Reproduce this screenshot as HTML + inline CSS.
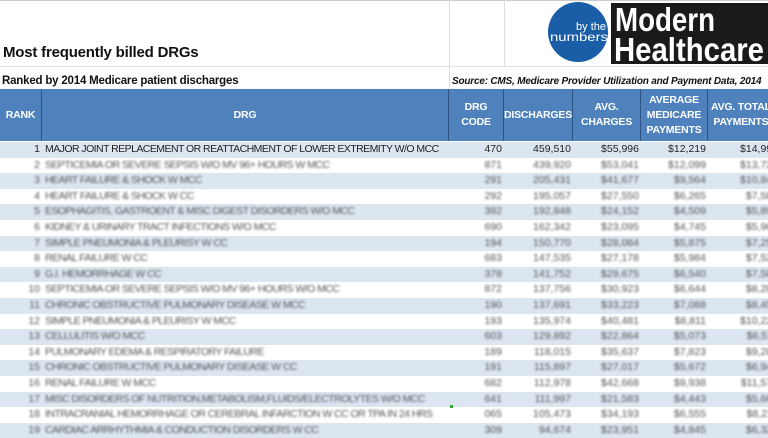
<!DOCTYPE html>
<html><head><meta charset="utf-8"><style>
*{margin:0;padding:0;box-sizing:border-box}
body{width:768px;height:436px;overflow:hidden;background:#fff;font-family:"Liberation Sans",Arial,sans-serif;position:relative}
.a{position:absolute;white-space:nowrap}
.hd{position:absolute;top:89px;height:52px;background:#4f81bd;color:#fff;font-weight:bold;font-size:10.5px;display:flex;align-items:center;justify-content:center;text-align:center;line-height:15px;border-right:1px solid #2f5486;letter-spacing:-0.2px}
.row{position:absolute;left:0;width:768px;height:15.6px;font-size:10.5px;color:#222;line-height:15.6px}
.row.b{background:#dce6f1}
.row span{position:absolute;top:0}
.bl span{filter:blur(1.1px);color:#555}
.r{left:0;width:40px;text-align:right}
.d{left:45px;letter-spacing:-0.55px}
.c1{left:449px;width:53px;text-align:right}
.c2{left:504px;width:67px;text-align:right}
.c3{left:573px;width:66px;text-align:right}
.c4{left:641px;width:65px;text-align:right}
.c5{left:708px;width:70px;text-align:right}
</style></head><body>
<div class="a" style="left:0;top:0;width:768px;height:1px;background:#ccc"></div>
<div class="a" style="left:449px;top:0;width:1px;height:89px;background:#ddd"></div>
<div class="a" style="left:504px;top:0;width:1px;height:66px;background:#ddd"></div>
<div class="a" style="left:0;top:66px;width:768px;height:1px;background:#e2e2e2"></div>
<div class="a" style="left:3px;top:44px;font-size:15px;font-weight:bold;color:#111;letter-spacing:-0.2px">Most frequently billed DRGs</div>
<div class="a" style="left:2px;top:75px;font-size:11.5px;font-weight:bold;color:#111;letter-spacing:-0.2px">Ranked by 2014 Medicare patient discharges</div>
<div class="a" style="left:452px;top:76px;font-size:10px;font-weight:bold;font-style:italic;color:#111;letter-spacing:-0.2px">Source: CMS, Medicare Provider Utilization and Payment Data, 2014</div>
<svg class="a" style="left:540px;top:0" width="228" height="66">
<circle cx="38" cy="32" r="30" fill="#1a5ea8"/>
<text x="66" y="30" fill="#fff" font-family="Liberation Sans Narrow,Liberation Sans,sans-serif" font-size="11" text-anchor="end">by the</text>
<text x="68" y="41" fill="#fff" font-family="Liberation Sans Narrow,Liberation Sans,sans-serif" font-size="12" text-anchor="end" textLength="58" lengthAdjust="spacingAndGlyphs">numbers</text>
<rect x="71" y="3" width="157" height="61" fill="#1a1a1a"/>
<text x="75" y="31" fill="#fff" font-family="Liberation Sans Narrow,Liberation Sans,sans-serif" font-weight="bold" font-size="33" textLength="100" lengthAdjust="spacingAndGlyphs">Modern</text>
<text x="74" y="61" fill="#fff" font-family="Liberation Sans Narrow,Liberation Sans,sans-serif" font-weight="bold" font-size="33" textLength="150" lengthAdjust="spacingAndGlyphs">Healthcare</text>
</svg>
<div class="hd" style="left:0;width:42px">RANK</div>
<div class="hd" style="left:42px;width:407px">DRG</div>
<div class="hd" style="left:449px;width:55px">DRG<br>CODE</div>
<div class="hd" style="left:504px;width:69px">DISCHARGES</div>
<div class="hd" style="left:573px;width:68px">AVG.<br>CHARGES</div>
<div class="hd" style="left:641px;width:67px">AVERAGE<br>MEDICARE<br>PAYMENTS</div>
<div class="hd" style="left:708px;width:70px;justify-content:flex-start;padding-left:3px">AVG. TOTAL<br>PAYMENTS</div>

<div class="row b" style="top:142px"><span class="r">1</span><span class="d">MAJOR JOINT REPLACEMENT OR REATTACHMENT OF LOWER EXTREMITY W/O MCC</span><span class="c1">470</span><span class="c2">459,510</span><span class="c3">$55,996</span><span class="c4">$12,219</span><span class="c5">$14,999</span></div>
<div class="row bl" style="top:157.6px"><span class="r">2</span><span class="d">SEPTICEMIA OR SEVERE SEPSIS W/O MV 96+ HOURS W MCC</span><span class="c1">871</span><span class="c2">439,920</span><span class="c3">$53,041</span><span class="c4">$12,099</span><span class="c5">$13,725</span></div>
<div class="row b bl" style="top:173.2px"><span class="r">3</span><span class="d">HEART FAILURE &amp; SHOCK W MCC</span><span class="c1">291</span><span class="c2">205,431</span><span class="c3">$41,677</span><span class="c4">$9,564</span><span class="c5">$10,845</span></div>
<div class="row bl" style="top:188.8px"><span class="r">4</span><span class="d">HEART FAILURE &amp; SHOCK W CC</span><span class="c1">292</span><span class="c2">195,057</span><span class="c3">$27,550</span><span class="c4">$6,265</span><span class="c5">$7,589</span></div>
<div class="row b bl" style="top:204.4px"><span class="r">5</span><span class="d">ESOPHAGITIS, GASTROENT &amp; MISC DIGEST DISORDERS W/O MCC</span><span class="c1">392</span><span class="c2">192,848</span><span class="c3">$24,152</span><span class="c4">$4,509</span><span class="c5">$5,891</span></div>
<div class="row bl" style="top:220px"><span class="r">6</span><span class="d">KIDNEY &amp; URINARY TRACT INFECTIONS W/O MCC</span><span class="c1">690</span><span class="c2">162,342</span><span class="c3">$23,095</span><span class="c4">$4,745</span><span class="c5">$5,961</span></div>
<div class="row b bl" style="top:235.6px"><span class="r">7</span><span class="d">SIMPLE PNEUMONIA &amp; PLEURISY W CC</span><span class="c1">194</span><span class="c2">150,770</span><span class="c3">$28,084</span><span class="c4">$5,875</span><span class="c5">$7,259</span></div>
<div class="row bl" style="top:251.2px"><span class="r">8</span><span class="d">RENAL FAILURE W CC</span><span class="c1">683</span><span class="c2">147,535</span><span class="c3">$27,178</span><span class="c4">$5,984</span><span class="c5">$7,521</span></div>
<div class="row b bl" style="top:266.8px"><span class="r">9</span><span class="d">G.I. HEMORRHAGE W CC</span><span class="c1">378</span><span class="c2">141,752</span><span class="c3">$29,675</span><span class="c4">$6,540</span><span class="c5">$7,581</span></div>
<div class="row bl" style="top:282.4px"><span class="r">10</span><span class="d">SEPTICEMIA OR SEVERE SEPSIS W/O MV 96+ HOURS W/O MCC</span><span class="c1">872</span><span class="c2">137,756</span><span class="c3">$30,923</span><span class="c4">$6,644</span><span class="c5">$8,281</span></div>
<div class="row b bl" style="top:298px"><span class="r">11</span><span class="d">CHRONIC OBSTRUCTIVE PULMONARY DISEASE W MCC</span><span class="c1">190</span><span class="c2">137,691</span><span class="c3">$33,223</span><span class="c4">$7,088</span><span class="c5">$8,451</span></div>
<div class="row bl" style="top:313.6px"><span class="r">12</span><span class="d">SIMPLE PNEUMONIA &amp; PLEURISY W MCC</span><span class="c1">193</span><span class="c2">135,974</span><span class="c3">$40,481</span><span class="c4">$8,811</span><span class="c5">$10,221</span></div>
<div class="row b bl" style="top:329.2px"><span class="r">13</span><span class="d">CELLULITIS W/O MCC</span><span class="c1">603</span><span class="c2">129,892</span><span class="c3">$22,864</span><span class="c4">$5,073</span><span class="c5">$6,511</span></div>
<div class="row bl" style="top:344.8px"><span class="r">14</span><span class="d">PULMONARY EDEMA &amp; RESPIRATORY FAILURE</span><span class="c1">189</span><span class="c2">118,015</span><span class="c3">$35,637</span><span class="c4">$7,823</span><span class="c5">$9,281</span></div>
<div class="row b bl" style="top:360.4px"><span class="r">15</span><span class="d">CHRONIC OBSTRUCTIVE PULMONARY DISEASE W CC</span><span class="c1">191</span><span class="c2">115,897</span><span class="c3">$27,017</span><span class="c4">$5,672</span><span class="c5">$6,941</span></div>
<div class="row bl" style="top:376px"><span class="r">16</span><span class="d">RENAL FAILURE W MCC</span><span class="c1">682</span><span class="c2">112,978</span><span class="c3">$42,668</span><span class="c4">$9,938</span><span class="c5">$11,571</span></div>
<div class="row b bl" style="top:391.6px"><span class="r">17</span><span class="d">MISC DISORDERS OF NUTRITION,METABOLISM,FLUIDS/ELECTROLYTES W/O MCC</span><span class="c1">641</span><span class="c2">111,997</span><span class="c3">$21,583</span><span class="c4">$4,443</span><span class="c5">$5,661</span></div>
<div class="row bl" style="top:407.2px"><span class="r">18</span><span class="d">INTRACRANIAL HEMORRHAGE OR CEREBRAL INFARCTION W CC OR TPA IN 24 HRS</span><span class="c1">065</span><span class="c2">105,473</span><span class="c3">$34,193</span><span class="c4">$6,555</span><span class="c5">$8,211</span></div>
<div class="row b bl" style="top:422.8px"><span class="r">19</span><span class="d">CARDIAC ARRHYTHMIA &amp; CONDUCTION DISORDERS W CC</span><span class="c1">309</span><span class="c2">94,674</span><span class="c3">$23,951</span><span class="c4">$4,845</span><span class="c5">$6,321</span></div>
<div class="a" style="left:450px;top:405px;width:3px;height:3px;background:#3a3"></div>
</body></html>
